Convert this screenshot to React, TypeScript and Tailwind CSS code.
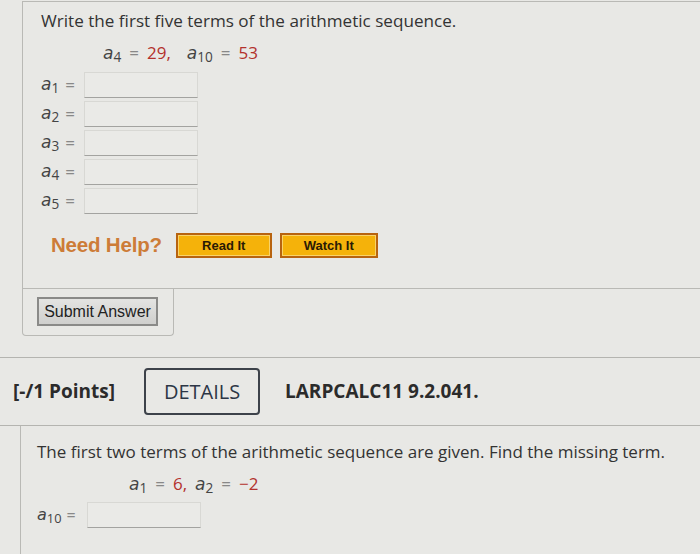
import React from "react";

function Term({ n }: { n: string }) {
  return (
    <span className="italic font-['DejaVu_Sans'] text-[#444]">
      a<sub className="text-[0.8em] not-italic font-['Open_Sans'] relative top-[3px]">{n}</sub>
    </span>
  );
}

function Blank({ w = "w-[114px]" }: { w?: string }) {
  return (
    <div
      className={`${w} h-[26px] border border-[#d8d8d4] border-b-[#a3a3a0] bg-[#eaeae7]`}
    />
  );
}

export default function App() {
  const rows = ["1", "2", "3", "4", "5"];

  return (
    <div className="min-h-screen w-[700px] h-[554px] overflow-hidden bg-[#e8e8e5] font-['Open_Sans'] text-[#333]">
      {/* Question 1 */}
      <div className="ml-[22px] mt-[1px] border-l border-t border-b border-[#b9b9b5] h-[288px] pl-[18px] pt-[7px]">
        <p className="text-[17.1px] leading-[24px]">
          Write the first five terms of the arithmetic sequence.
        </p>

        <div className="mt-[8px] ml-[62px] text-[17px] leading-[24px] flex gap-[4px]">
          <Term n="4" />
          <span className="text-[#888] mx-[4px]">=</span>
          <span className="text-[#b3312c]">29,</span>
          <span className="w-[8px]" />
          <Term n="10" />
          <span className="text-[#888] mx-[4px]">=</span>
          <span className="text-[#b3312c]">53</span>
        </div>

        <div className="mt-[7px] flex flex-col gap-[3px]">
          {rows.map((r) => (
            <div key={r} className="flex items-center h-[26px]">
              <div className="w-[43px] text-[17px] flex items-center">
                <Term n={r} />
                <span className="text-[#888] ml-[6px]">=</span>
              </div>
              <Blank />
            </div>
          ))}
        </div>

        <div className="mt-[16px] flex items-center font-['Liberation_Sans']">
          <span className="ml-[10px] text-[20.5px] font-bold text-[#cd7c37] tracking-[-0.2px]">
            Need Help?
          </span>
          <button className="ml-[14px] w-[96px] h-[25px] border-2 border-[#b8630f] bg-[#f5b20a] shadow-[inset_0_0_0_1px_#f9d36a] text-[13px] font-bold text-[#2a1a05]">
            Read It
          </button>
          <button className="ml-[8px] w-[98px] h-[25px] border-2 border-[#b8630f] bg-[#f5b20a] shadow-[inset_0_0_0_1px_#f9d36a] text-[13px] font-bold text-[#2a1a05]">
            Watch It
          </button>
        </div>
      </div>

      {/* Submit tab */}
      <div className="ml-[22px] w-[152px] h-[47px] border-l border-r border-b border-[#b9b9b5] rounded-b-[4px] pl-[14px] pt-[8px]">
        <button className="w-[121px] h-[29px] border-2 border-[#8a8a88] bg-gradient-to-b from-[#e4e4e2] to-[#cfcfcd] text-[16px] font-['Liberation_Sans'] text-[#222]">
          Submit Answer
        </button>
      </div>

      {/* Question 2 header */}
      <div className="mt-[21px] border-t border-b border-[#b4b4b0] h-[69px] flex items-center pl-[13px]">
        <span className="text-[19px] font-bold text-[#2b2b2b]">[-/1 Points]</span>
        <div className="ml-[29px] w-[116px] h-[47px] border-2 border-[#3d424a] rounded-[4px] flex items-center justify-center text-[20px] text-[#2c3645]">
          DETAILS
        </div>
        <span className="ml-[25px] text-[19px] font-bold text-[#2b2b2b]">LARPCALC11 9.2.041.</span>
      </div>

      {/* Question 2 */}
      <div className="ml-[20px] border-l border-[#b9b9b5] h-[130px] pl-[16px] pt-[14px]">
        <p className="text-[17px] leading-[24px]">
          The first two terms of the arithmetic sequence are given. Find the missing term.
        </p>
        <div className="mt-[8px] ml-[92px] text-[17px] leading-[24px] flex gap-[4px]">
          <Term n="1" />
          <span className="text-[#888] mx-[4px]">=</span>
          <span className="text-[#b3312c] mr-[4px]">6,</span>
          <Term n="2" />
          <span className="text-[#888] mx-[4px]">=</span>
          <span className="text-[#b3312c]">&minus;2</span>
        </div>
        <div className="mt-[6px] flex items-center">
          <div className="w-[50px] text-[16px] flex items-center">
            <Term n="10" />
            <span className="text-[#888] ml-[5px]">=</span>
          </div>
          <Blank w="w-[114px]" />
        </div>
      </div>
    </div>
  );
}
